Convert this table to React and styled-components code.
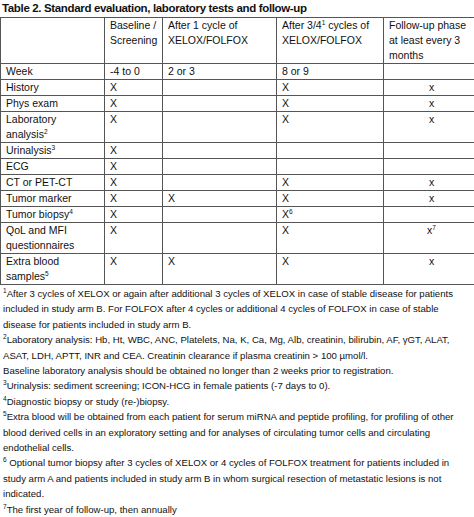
import React from 'react';
import styled, { createGlobalStyle } from 'styled-components';

const GlobalStyle = createGlobalStyle`
    html, body {
        margin: 0;
        padding: 0;
        background: #fff;
    }
    body {
        font-family: "Liberation Sans", Arial, sans-serif;
        color: #111;
        overflow: hidden;
    }
`;

const Page = styled.div`
    width: 474px;
    height: 517px;
    overflow: hidden;
`;

const Title = styled.div`
    font-weight: bold;
    font-size: 11.5px;
    line-height: 17px;
    padding-left: 2px;
    letter-spacing: -0.35px;
    white-space: nowrap;
`;

const Table = styled.table`
    border-collapse: collapse;
    table-layout: fixed;
    width: 474px;
    font-size: 10.5px;
    line-height: 15px;
`;

const Cell = styled.td`
    border: 1px solid #555;
    padding: 0 0 0 5px;
    vertical-align: top;
    text-align: ${p => (p.center ? 'center' : 'left')};
    white-space: nowrap;
`;

const Sup = styled.span`
    font-size: 6.5px;
    line-height: 0;
    vertical-align: 4px;
`;

const Notes = styled.div`
    font-size: 9.6px;
    line-height: 15.4px;
    padding: 1px 0 0 3px;
`;

const Line = styled.div`
    white-space: nowrap;
`;

const rows = [
    { label: ['Week'], cells: ['-4 to 0', '2 or 3', '8 or 9', ''] },
    { label: ['History'], cells: ['X', '', 'X', 'x'] },
    { label: ['Phys exam'], cells: ['X', '', 'X', 'x'] },
    { label: ['Laboratory', <>analysis<Sup>2</Sup></>], cells: ['X', '', 'X', 'x'] },
    { label: [<>Urinalysis<Sup>3</Sup></>], cells: ['X', '', '', ''] },
    { label: ['ECG'], cells: ['X', '', '', ''] },
    { label: ['CT or PET-CT'], cells: ['X', '', 'X', 'x'] },
    { label: ['Tumor marker'], cells: ['X', 'X', 'X', 'x'] },
    { label: [<>Tumor biopsy<Sup>4</Sup></>], cells: ['X', '', <>X<Sup>6</Sup></>, ''] },
    { label: ['QoL and MFI', 'questionnaires'], cells: ['X', '', 'X', <>x<Sup>7</Sup></>] },
    { label: ['Extra blood', <>samples<Sup>5</Sup></>], cells: ['X', 'X', 'X', 'x'] },
];

const notes = [
    <><Sup>1</Sup>After 3 cycles of XELOX or again after additional 3 cycles of XELOX in case of stable disease for patients</>,
    'included in study arm B. For FOLFOX after 4 cycles or additional 4 cycles of FOLFOX in case of stable',
    'disease for patients included in study arm B.',
    <><Sup>2</Sup>Laboratory analysis: Hb, Ht, WBC, ANC, Platelets, Na, K, Ca, Mg, Alb, creatinin, bilirubin, AF, γGT, ALAT,</>,
    'ASAT, LDH, APTT, INR and CEA. Creatinin clearance if plasma creatinin > 100 µmol/l.',
    'Baseline laboratory analysis should be obtained no longer than 2 weeks prior to registration.',
    <><Sup>3</Sup>Urinalysis: sediment screening; ICON-HCG in female patients (-7 days to 0).</>,
    <><Sup>4</Sup>Diagnostic biopsy or study (re-)biopsy.</>,
    <><Sup>5</Sup>Extra blood will be obtained from each patient for serum miRNA and peptide profiling, for profiling of other</>,
    'blood derived cells in an exploratory setting and for analyses of circulating tumor cells and circulating',
    'endothelial cells.',
    <><Sup>6</Sup> Optional tumor biopsy after 3 cycles of XELOX or 4 cycles of FOLFOX treatment for patients included in</>,
    'study arm A and patients included in study arm B in whom surgical resection of metastatic lesions is not',
    'indicated.',
    <><Sup>7</Sup>The first year of follow-up, then annually</>,
];

const Lines = ({ items }) => items.map((t, i) => <Line key={i}>{t}</Line>);

const App = () => (
    <>
        <GlobalStyle />
        <Page>
            <Title>Table 2. Standard evaluation, laboratory tests and follow-up</Title>
            <Table>
                <colgroup>
                    <col style={{ width: 104 }} />
                    <col style={{ width: 58 }} />
                    <col style={{ width: 114 }} />
                    <col style={{ width: 107 }} />
                    <col style={{ width: 91 }} />
                </colgroup>
                <tbody>
                    <tr>
                        <Cell />
                        <Cell><Lines items={['Baseline /', 'Screening']} /></Cell>
                        <Cell><Lines items={['After 1 cycle of', 'XELOX/FOLFOX']} /></Cell>
                        <Cell><Lines items={[<>After 3/4<Sup>1</Sup> cycles of</>, 'XELOX/FOLFOX']} /></Cell>
                        <Cell><Lines items={['Follow-up phase', 'at least every 3', 'months']} /></Cell>
                    </tr>
                    {rows.map((r, i) => (
                        <tr key={i}>
                            <Cell><Lines items={r.label} /></Cell>
                            {r.cells.map((c, j) => (
                                <Cell key={j} center={j === 3 && i > 0}>{c}</Cell>
                            ))}
                        </tr>
                    ))}
                </tbody>
            </Table>
            <Notes><Lines items={notes} /></Notes>
        </Page>
    </>
);

export default App;
